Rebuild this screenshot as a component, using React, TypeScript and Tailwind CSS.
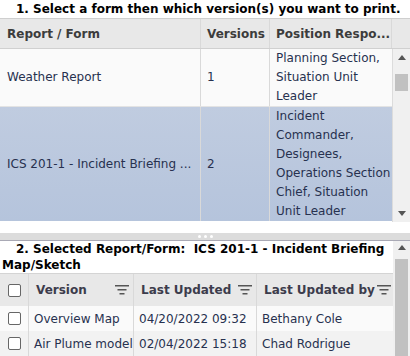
import { ReactNode } from "react";

const font = { fontFamily: '"DejaVu Sans", Verdana, sans-serif' };

function FilterIcon() {
    return (
        <svg width="14" height="10" viewBox="0 0 14 10" className="shrink-0">
            <rect x="0" y="0" width="14" height="1.5" fill="#555" />
            <rect x="2.5" y="4" width="9" height="1.5" fill="#555" />
            <rect x="4.5" y="8" width="5" height="1.5" fill="#555" />
        </svg>
    );
}

function Checkbox() {
    return <div className="w-[13px] h-[13px] border border-[#666] rounded-[2px] bg-white" />;
}

function UpArrow() {
    return (
        <svg width="8" height="5" viewBox="0 0 8 5">
            <path d="M0 5 L4 0 L8 5 Z" fill="#555" />
        </svg>
    );
}

function DownArrow() {
    return (
        <svg width="8" height="5" viewBox="0 0 8 5">
            <path d="M0 0 L4 5 L8 0 Z" fill="#555" />
        </svg>
    );
}

function Cell({ children, className = "" }: { children: ReactNode; className?: string }) {
    return <div className={`flex items-center border-r border-[#d9d9d9] ${className}`}>{children}</div>;
}

const positions = [
    { form: "Weather Report", versions: "1", lines: ["Planning Section,", "Situation Unit", "Leader"], selected: false },
    {
        form: "ICS 201-1 - Incident Briefing ...",
        versions: "2",
        lines: ["Incident", "Commander,", "Designees,", "Operations Section", "Chief, Situation", "Unit Leader"],
        selected: true,
    },
];

const versions = [
    { name: "Overview Map", updated: "04/20/2022 09:32", by: "Bethany Cole", bg: "bg-[#fafafa]" },
    { name: "Air Plume model", updated: "02/04/2022 15:18", by: "Chad Rodrigue", bg: "bg-[#f2f2f2]" },
];

export default function App() {
    return (
        <div className="w-[410px] h-[356px] overflow-hidden bg-white text-[12px]" style={font}>
            {/* panel 1 */}
            <div className="h-[18px] pl-[16px] font-bold text-black leading-[18px] whitespace-nowrap">
                1. Select a form then which version(s) you want to print.
            </div>
            <div className="border-t border-[#cfcfcf]">
                <div className="flex h-[30px] bg-[#e8e8e8] border-b border-[#d0d0d0] font-bold text-[#3c3c3c]">
                    <Cell className="w-[201px] pl-[7px]">Report / Form</Cell>
                    <Cell className="w-[69px] pl-[6px]">Versions</Cell>
                    <Cell className="w-[122px] pl-[6px] whitespace-nowrap overflow-hidden">Position Respo...</Cell>
                    <div className="flex-1" />
                </div>
                <div className="flex">
                    <div className="w-[392px]">
                        {positions.map((p) => (
                            <div
                                key={p.form}
                                className={`flex text-[#27314f] leading-[19px] ${
                                    p.selected ? "bg-gradient-to-b from-[#c0cce0] to-[#b5c4dc]" : "bg-[#fafafa] border-b border-[#e3e3e3]"
                                }`}
                            >
                                <Cell className="w-[201px] pl-[7px] whitespace-nowrap">{p.form}</Cell>
                                <Cell className="w-[69px] pl-[6px]">{p.versions}</Cell>
                                <div className="w-[122px] pl-[6px] whitespace-nowrap">
                                    {p.lines.map((l) => (
                                        <div key={l}>{l}</div>
                                    ))}
                                </div>
                            </div>
                        ))}
                    </div>
                    <div className="flex-1 flex flex-col items-center bg-[#f0f0f0] border-l border-[#dcdcdc] h-[173px]">
                        <div className="h-[17px] flex items-center">
                            <UpArrow />
                        </div>
                        <div className="w-[13px] h-[17px] mt-[8px] bg-[#c1c1c1]" />
                        <div className="flex-1" />
                        <div className="h-[17px] flex items-center">
                            <DownArrow />
                        </div>
                    </div>
                </div>
            </div>

            {/* splitter */}
            <div className="h-[11px]" />
            <div className="h-[8px] bg-[#dcdcdc] border-b border-[#a9a9b5] flex items-center justify-center gap-[3px]">
                <span className="w-[3px] h-[3px] rounded-full bg-white" />
                <span className="w-[3px] h-[3px] rounded-full bg-white" />
                <span className="w-[3px] h-[3px] rounded-full bg-white" />
            </div>

            {/* panel 2 */}
            <div className="flex">
                <div className="w-[393px]">
                    <div className="font-bold text-black leading-[16px] pl-[2px] indent-[14px]">
                        2. Selected Report/Form:&nbsp; ICS 201-1 - Incident Briefing Map/Sketch
                    </div>
                    <div className="flex h-[33px] bg-[#e8e8e8] border-t border-[#d4d4d4] font-bold text-[#3c3c4c]">
                        <Cell className="w-[29px] justify-center">
                            <Checkbox />
                        </Cell>
                        <Cell className="w-[105px] pl-[7px] pr-[4px] justify-between">
                            <span>Version</span>
                            <FilterIcon />
                        </Cell>
                        <Cell className="w-[123px] pl-[7px] pr-[4px] justify-between whitespace-nowrap">
                            <span>Last Updated</span>
                            <FilterIcon />
                        </Cell>
                        <div className="flex-1 flex items-center pl-[7px] pr-[2px] justify-between whitespace-nowrap">
                            <span>Last Updated by</span>
                            <FilterIcon />
                        </div>
                    </div>
                    {versions.map((v) => (
                        <div key={v.name} className={`flex h-[25px] text-[#27314f] ${v.bg}`}>
                            <Cell className="w-[29px] justify-center">
                                <Checkbox />
                            </Cell>
                            <Cell className="w-[105px] pl-[5px] whitespace-nowrap">{v.name}</Cell>
                            <Cell className="w-[123px] pl-[5px] whitespace-nowrap">{v.updated}</Cell>
                            <div className="flex-1 flex items-center pl-[5px] whitespace-nowrap">{v.by}</div>
                        </div>
                    ))}
                </div>
                <div className="flex-1 flex flex-col items-center bg-[#f0f0f0] h-[120px]">
                    <div className="h-[12px] flex items-center">
                        <UpArrow />
                    </div>
                    <div className="w-[13px] flex-1 mt-[6px] bg-[#c1c1c1]" />
                </div>
            </div>
        </div>
    );
}
